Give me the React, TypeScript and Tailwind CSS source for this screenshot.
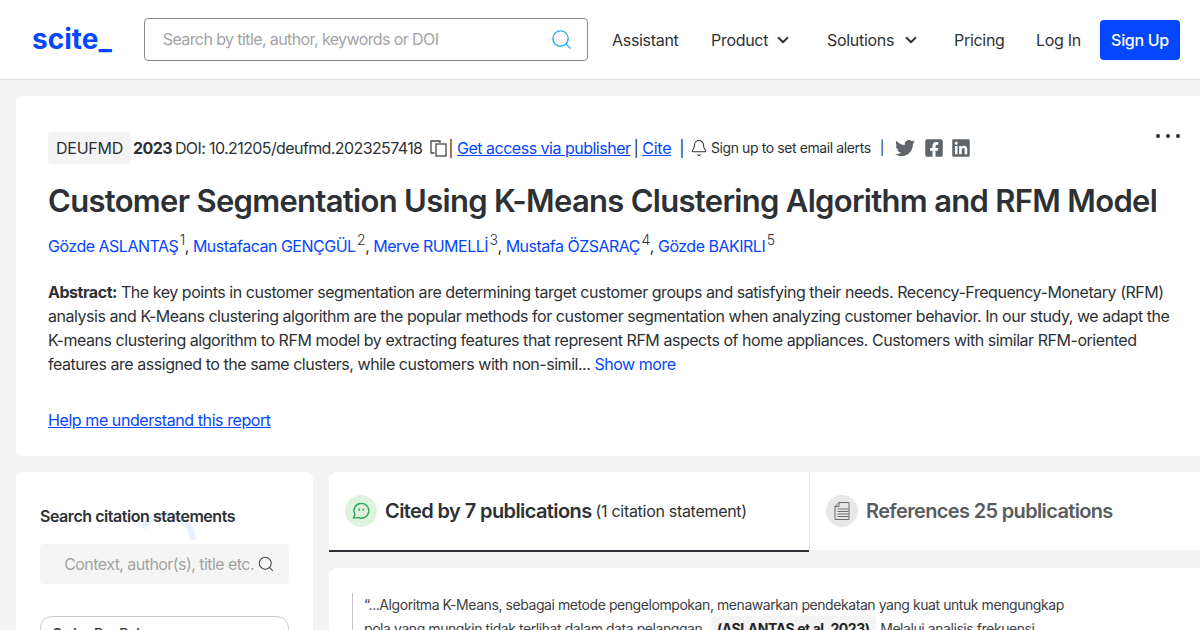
import React from "react";
import { Bell, ChevronDown, Search } from "lucide-react";
import { FaFacebookSquare, FaLinkedin, FaTwitter } from "react-icons/fa";

const authors = [
  { name: "Gözde ASLANTAŞ", n: 1 },
  { name: "Mustafacan GENÇGÜL", n: 2 },
  { name: "Merve RUMELLİ", n: 3 },
  { name: "Mustafa ÖZSARAÇ", n: 4 },
  { name: "Gözde BAKIRLI", n: 5 },
];

const Header = () => (
  <header className="h-20 shrink-0 flex items-center bg-white border-b border-[#dddddd] pl-8 pr-5 text-[#2d3135]">
    <span className="w-[112px] text-[28px] font-bold text-[#0546ff] leading-none -mt-0.5">scite_</span>
    <div className="w-[445px] h-[43px] flex items-center justify-between border border-[#8a8a8a] rounded pl-[18px] pr-[14px]">
      <span className="text-base text-[#a3a3a3] tracking-[-0.6px] -mt-0.5">Search by title, author, keywords or DOI</span>
      <Search size={23} strokeWidth={1.4} className="text-[#28a8f5]" />
    </div>
    <nav className="flex items-center text-base tracking-[-0.3px] ml-6">
      <span className="w-[99px]">Assistant</span>
      <span className="w-[116px] flex items-center">
        Product <ChevronDown size={18} strokeWidth={2.5} className="ml-1.5" />
      </span>
      <span className="w-[127px] flex items-center">
        Solutions <ChevronDown size={18} strokeWidth={2.5} className="ml-2" />
      </span>
      <span className="w-[82px]">Pricing</span>
      <span className="w-[64px]">Log In</span>
      <span className="w-[80px] h-10 flex items-center justify-center rounded bg-[#0546ff] text-white font-medium">Sign Up</span>
    </nav>
  </header>
);

const ReportCard = () => (
  <section className="relative h-[360px] bg-white rounded-l-lg pl-8 pt-9 text-[#2d3135]">
    <div className="flex items-center h-8 text-base tracking-[-0.6px] whitespace-nowrap">
      <span className="h-8 px-2 flex items-center rounded bg-[#f4f4f4] mr-[2px] tracking-[-0.25px]">DEUFMD</span>
      <b className="font-bold mr-[3px]">2023</b>
      <span>DOI: 10.21205/deufmd.2023257418</span>
      <svg width="17" height="17" viewBox="0 0 17 17" fill="none" stroke="#44484c" strokeWidth="1.3" className="ml-[8px]">
        <path d="M4.5 13H1V1h9v2" />
        <rect x="6" y="4" width="10" height="12" />
      </svg>
      <span className="ml-[1px] mr-1">|</span>
      <a className="text-[#0546ff] underline tracking-[-0.5px]">Get access via publisher</a>
      <span className="ml-[3px] mr-1">|</span>
      <a className="text-[#0546ff] underline tracking-[-0.25px]">Cite</a>
      <span className="ml-[8px]">|</span>
      <Bell size={18} strokeWidth={1.4} className="ml-[6px]" />
      <span className="ml-[3px] text-sm tracking-[-0.4px]">Sign up to set email alerts</span>
      <span className="ml-[9px] text-sm">|</span>
      <FaTwitter size={20} className="ml-[11px] text-[#5f6569]" />
      <FaFacebookSquare size={20} className="ml-[9px] text-[#5f6569]" />
      <FaLinkedin size={20} className="ml-[7px] text-[#5f6569]" />
    </div>
    <div className="absolute right-[20px] top-[38px] flex gap-1.5">
      <span className="w-1 h-1 rounded-full bg-[#2d3135]" />
      <span className="w-1 h-1 rounded-full bg-[#2d3135]" />
      <span className="w-1 h-1 rounded-full bg-[#2d3135]" />
    </div>
    <h1 className="mt-[17px] text-[31px] leading-[40px] font-semibold tracking-[-0.7px] whitespace-nowrap">
      Customer Segmentation Using K-Means Clustering Algorithm and RFM Model
    </h1>
    <p className="mt-[13px] h-7 text-base tracking-[-0.5px] text-[#0546ff] whitespace-nowrap">
      {authors.map((a, i) => (
        <span key={a.name}>
          {a.name}
          <sup className="text-[#2d3135] text-sm font-light ml-[1.5px]">{a.n}</sup>
          {i < authors.length - 1 && <span className="text-[#2d3135]">, </span>}
        </span>
      ))}
    </p>
    <div className="mt-[18px] w-[1125px] text-base leading-6 tracking-[-0.46px]">
      <b className="font-bold">Abstract:</b> The key points in customer segmentation are determining target customer groups and satisfying their needs. Recency-Frequency-Monetary (RFM) analysis and K-Means clustering algorithm are the popular methods for customer segmentation when analyzing customer behavior. In our study, we adapt the K-means clustering algorithm to RFM model by extracting features that represent RFM aspects of home appliances. Customers with similar RFM-oriented features are assigned to the same clusters, while customers with non-simil... <a className="text-[#0546ff]">Show more</a>
    </div>
    <a className="block mt-8 text-base tracking-[-0.42px] text-[#0546ff] underline">Help me understand this report</a>
  </section>
);

const Sidebar = () => (
  <aside className="relative w-[297px] shrink-0 h-[300px] bg-white rounded-lg px-6 pt-[34px] text-[#2d3135]">
    <svg width="60" height="30" viewBox="0 0 60 30" fill="none" className="absolute left-[124px] top-[41px] overflow-visible">
      <path d="M3 15 A 27 27 0 0 1 53 27" stroke="#e8f0ff" strokeWidth="6" />
    </svg>
    <h3 className="relative text-base leading-5 font-semibold tracking-[-0.45px]">Search citation statements</h3>
    <div className="mt-[18px] h-10 flex items-center justify-end gap-[3px] rounded bg-[#f5f5f5] pr-[14px]">
      <span className="text-base text-[#a3a3a3] tracking-[-0.55px]">Context, author(s), title etc.</span>
      <Search size={18} strokeWidth={1.4} className="text-[#44484c]" />
    </div>
    <div className="mt-8 h-16 rounded-xl border border-[#c9c9c9] px-[11px] pt-[7px] text-sm font-medium">Order By: Relevance</div>
  </aside>
);

const Tabs = () => (
  <div className="flex h-20">
    <div className="w-[480px] h-20 flex items-center bg-white border-b-2 border-[#2d3135] pl-4 rounded-tl-lg text-[#2d3135]">
      <span className="w-8 h-8 flex items-center justify-center rounded-full bg-[#ddf3dd]">
        <svg width="20" height="20" viewBox="0 0 20 20" fill="none" stroke="#2fa84f" strokeWidth="1.4">
          <path d="M2.5 17l1.4-3.6A7.4 7.4 0 1 1 7 16.4c-1.5.4-3 .6-4.5.6z" strokeLinejoin="round" />
          <path d="M8.5 7.5c0 1-.3 1.6-1 2M12.5 7.5c0 1-.3 1.6-1 2" strokeWidth="1.5" />
        </svg>
      </span>
      <span className="ml-2 text-[20px] font-semibold tracking-[-0.6px]">Cited by 7 publications</span>
      <span className="ml-1 text-base tracking-[-0.3px]">(1 citation statement)</span>
    </div>
    <div className="flex-1 h-[78px] flex items-center bg-white border-l border-[#e5e5e5] pl-4 text-[#5a5d60]">
      <span className="w-8 h-8 flex items-center justify-center rounded-full bg-[#e8e8e8]">
        <svg width="18" height="20" viewBox="0 0 18 20" fill="none" stroke="#5a5d60" strokeWidth="0.9">
          <path d="M6 1.5h10v17H2V5.5zM6 1.5v4H2" strokeLinejoin="round" />
          <path d="M4.5 8h11M4.5 10.5h11M4.5 13h11M4.5 15.5h11" />
        </svg>
      </span>
      <span className="ml-2 text-[20px] font-semibold tracking-[-0.65px]">References 25 publications</span>
    </div>
  </div>
);

const Statement = () => (
  <div className="mt-4 bg-white rounded-l-lg pl-[23px] pt-[25px] h-[200px]">
    <blockquote className="w-[717px] border-l border-[#c4c4c4] pl-[11px] text-sm leading-6 tracking-[-0.43px] text-[#3c4044]">
      “...Algoritma K-Means, sebagai metode pengelompokan, menawarkan pendekatan yang kuat untuk mengungkap pola yang mungkin tidak terlihat dalam data pelanggan <b className="font-bold text-[#1f2326] bg-[#f4f4f4] rounded px-1.5 py-1 ml-[5px] mr-px">(ASLANTAŞ et al. 2023)</b> Melalui analisis frekuensi
    </blockquote>
  </div>
);

export default function App() {
  return (
    <div className="w-[1200px] h-[630px] overflow-hidden flex flex-col bg-[#f4f4f4] font-['Inter','Liberation_Sans',sans-serif]">
      <Header />
      <main className="pl-4 pt-4">
        <ReportCard />
        <div className="flex gap-4 mt-4">
          <Sidebar />
          <div className="flex-1 min-w-0">
            <Tabs />
            <Statement />
          </div>
        </div>
      </main>
    </div>
  );
}
